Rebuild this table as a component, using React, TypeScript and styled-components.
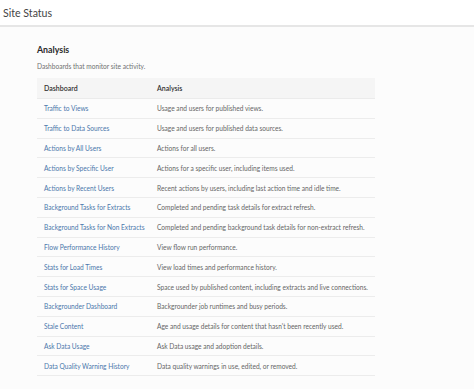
import styled, { createGlobalStyle } from 'styled-components';

const GlobalStyle = createGlobalStyle`
  html, body {
    margin: 0;
    padding: 0;
    background: #fcfcfc;
  }
  body {
    font-family: Lato, "Liberation Sans", Arial, sans-serif;
    color: #333;
  }
`;

const rows: [string, string][] = [
  ['Traffic to Views', 'Usage and users for published views.'],
  ['Traffic to Data Sources', 'Usage and users for published data sources.'],
  ['Actions by All Users', 'Actions for all users.'],
  ['Actions by Specific User', 'Actions for a specific user, including items used.'],
  ['Actions by Recent Users', 'Recent actions by users, including last action time and idle time.'],
  ['Background Tasks for Extracts', 'Completed and pending task details for extract refresh.'],
  ['Background Tasks for Non Extracts', 'Completed and pending background task details for non-extract refresh.'],
  ['Flow Performance History', 'View flow run performance.'],
  ['Stats for Load Times', 'View load times and performance history.'],
  ['Stats for Space Usage', 'Space used by published content, including extracts and live connections.'],
  ['Backgrounder Dashboard', 'Backgrounder job runtimes and busy periods.'],
  ['Stale Content', "Age and usage details for content that hasn't been recently used."],
  ['Ask Data Usage', 'Ask Data usage and adoption details.'],
  ['Data Quality Warning History', 'Data quality warnings in use, edited, or removed.'],
];

export default function App() {
  return (
    <Page>
      <GlobalStyle />
      <Header>
        <Title>Site Status</Title>
      </Header>
      <Content>
        <SectionTitle>Analysis</SectionTitle>
        <Description>Dashboards that monitor site activity.</Description>
        <Table>
          <thead>
            <tr>
              <HeadCell>Dashboard</HeadCell>
              <HeadCell>Analysis</HeadCell>
            </tr>
          </thead>
          <tbody>
            {rows.map(([name, desc]) => (
              <Row key={name}>
                <Cell>
                  <DashLink href="#">{name}</DashLink>
                </Cell>
                <Cell>{desc}</Cell>
              </Row>
            ))}
          </tbody>
        </Table>
      </Content>
    </Page>
  );
}

const Page = styled.div`
  width: 474px;
  min-height: 389px;
`;

const Header = styled.div`
  height: 25px;
  background: #fff;
  border-bottom: 2px solid #e6e6e6;
  display: flex;
  align-items: center;
  padding-left: 3px;
`;

const Title = styled.h1`
  margin: 0;
  font-size: 10.6px;
  font-weight: 400;
  color: #444;
`;

const Content = styled.div`
  padding: 16px 0 0 37px;
`;

const SectionTitle = styled.h2`
  margin: 0;
  font-size: 8.8px;
  font-weight: 700;
  color: #2b2b2b;
  line-height: 14px;
`;

const Description = styled.p`
  margin: 4px 0 0;
  font-size: 6.6px;
  color: #707070;
  line-height: 10px;
`;

const Table = styled.table`
  margin-top: 7px;
  width: 338px;
  table-layout: fixed;
  border-collapse: collapse;
  font-size: 6.6px;
`;

const HeadCell = styled.th`
  text-align: left;
  font-weight: 600;
  font-size: 7px;
  color: #333;
  background: #f5f5f5;
  height: 20px;
  padding: 0 0 0 7px;
  border-bottom: 1px solid #ebebeb;
  &:first-child {
    width: 106px;
  }
`;

const Row = styled.tr`
  height: 19.8px;
  border-bottom: 1px solid #ececec;
`;

const Cell = styled.td`
  padding: 0 0 0 7px;
  color: #666;
  white-space: nowrap;
  overflow: visible;
`;

const DashLink = styled.a`
  color: #4a77ab;
  text-decoration: none;
`;
